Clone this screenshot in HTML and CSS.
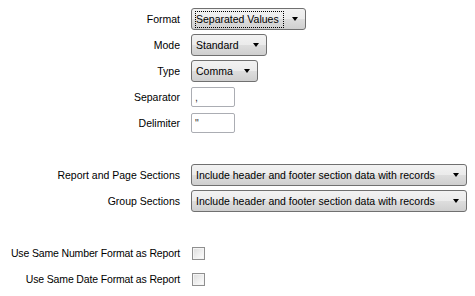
FILE: index.html
```html
<!DOCTYPE html>
<html>
<head>
<meta charset="utf-8">
<link rel="stylesheet" href="styles.css">
</head>
<body>
<div class="form">
  <div class="label">Format</div>
  <div class="cell"><div class="combo w-format"><span class="focus">Separated Values</span><span class="arrow"></span></div></div>

  <div class="label">Mode</div>
  <div class="cell"><div class="combo w-mode"><span class="val">Standard</span><span class="arrow"></span></div></div>

  <div class="label">Type</div>
  <div class="cell"><div class="combo w-type"><span class="val">Comma</span><span class="arrow"></span></div></div>

  <div class="label">Separator</div>
  <div class="cell"><div class="textbox">,</div></div>

  <div class="label">Delimiter</div>
  <div class="cell"><div class="textbox">"</div></div>

  <div class="spacer"></div>

  <div class="label">Report and Page Sections</div>
  <div class="cell"><div class="combo w-wide"><span class="val">Include header and footer section data with records</span><span class="arrow"></span></div></div>

  <div class="label">Group Sections</div>
  <div class="cell"><div class="combo w-wide"><span class="val">Include header and footer section data with records</span><span class="arrow"></span></div></div>

  <div class="spacer short"></div>

  <div class="label tight">Use Same Number Format as Report</div>
  <div class="cell"><div class="check"></div></div>

  <div class="label tight">Use Same Date Format as Report</div>
  <div class="cell"><div class="check"></div></div>
</div>
</body>
</html>
```

FILE: styles.css
```css
html, body {
  margin: 0;
  padding: 0;
  background: #ffffff;
}
body {
  font-family: "Liberation Sans", Arial, sans-serif;
  font-size: 10.5px;
  color: #000000;
}
.form {
  display: grid;
  grid-template-columns: 180px auto;
  grid-auto-rows: 26px;
  column-gap: 11px;
  padding-top: 6px;
}
.label {
  display: flex;
  align-items: center;
  justify-content: flex-end;
  white-space: nowrap;
}
.label.tight {
  letter-spacing: -0.15px;
}
.cell {
  display: flex;
  align-items: center;
}
.spacer {
  grid-column: 1 / 3;
}
.spacer.short {
  height: 25px;
}
.combo {
  box-sizing: border-box;
  height: 22px;
  border: 1px solid #707070;
  border-radius: 3px;
  background: linear-gradient(#f2f2f2 0%, #ebebeb 50%, #dddddd 51%, #cfcfcf 100%);
  display: flex;
  align-items: center;
  padding-left: 3px;
  padding-right: 7px;
  justify-content: space-between;
}
.val {
  padding-left: 1px;
  white-space: nowrap;
}
.focus {
  border: 1px dotted #000;
  padding: 1px 4px 1px 0;
  white-space: nowrap;
  line-height: 13px;
}
.arrow {
  width: 0;
  height: 0;
  border-left: 3.5px solid transparent;
  border-right: 3.5px solid transparent;
  border-top: 4px solid #000;
  margin-left: 6px;
}
.w-format { width: 115px; }
.w-mode { width: 76px; }
.w-type { width: 67px; }
.w-wide { width: 276px; }
.textbox {
  box-sizing: border-box;
  width: 44px;
  height: 20px;
  border: 1px solid #abadb3;
  border-radius: 2px;
  padding: 2px 3px;
  line-height: 14px;
  color: #333;
}
.check {
  box-sizing: border-box;
  width: 13px;
  height: 13px;
  margin-left: 1px;
  border: 1px solid #8f8f8f;
  background: linear-gradient(135deg, #dcdcdc, #ffffff);
  box-shadow: inset 0 0 0 1px #f4f4f4;
}
```
